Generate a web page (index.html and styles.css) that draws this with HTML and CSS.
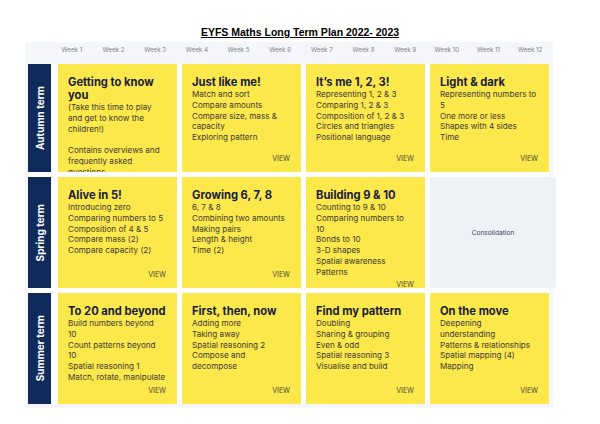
FILE: index.html
```html
<!DOCTYPE html>
<html lang="en">
<head>
<meta charset="utf-8">
<title>EYFS Maths Long Term Plan</title>
<link rel="stylesheet" href="styles.css">
</head>
<body>
<div class="page">
  <h1 class="title">EYFS Maths Long Term Plan 2022- 2023</h1>
  <div class="panel">
    <div class="weeks">
      <span>Week 1</span><span>Week 2</span><span>Week 3</span><span>Week 4</span>
      <span>Week 5</span><span>Week 6</span><span>Week 7</span><span>Week 8</span>
      <span>Week 9</span><span>Week 10</span><span>Week 11</span><span>Week 12</span>
    </div>
    <div class="plan">
      <div class="term"><span>Autumn term</span></div>
      <div class="card">
        <div class="card-title">Getting to know<br>you</div>
        <div class="line">(Take this time to play</div>
        <div class="line">and get to know the</div>
        <div class="line">children!)</div>
        <div class="line">&nbsp;</div>
        <div class="line">Contains overviews and</div>
        <div class="line">frequently asked</div>
        <div class="line">questions</div>
      </div>
      <div class="card">
        <div class="card-title">Just like me!</div>
        <div class="line">Match and sort</div>
        <div class="line">Compare amounts</div>
        <div class="line">Compare size, mass &amp;</div>
        <div class="line">capacity</div>
        <div class="line">Exploring pattern</div>
        <div class="view">VIEW</div>
      </div>
      <div class="card">
        <div class="card-title">It’s me 1, 2, 3!</div>
        <div class="line">Representing 1, 2 &amp; 3</div>
        <div class="line">Comparing 1, 2 &amp; 3</div>
        <div class="line">Composition of 1, 2 &amp; 3</div>
        <div class="line">Circles and triangles</div>
        <div class="line">Positional language</div>
        <div class="view">VIEW</div>
      </div>
      <div class="card">
        <div class="card-title">Light &amp; dark</div>
        <div class="line">Representing numbers to</div>
        <div class="line">5</div>
        <div class="line">One more or less</div>
        <div class="line">Shapes with 4 sides</div>
        <div class="line">Time</div>
        <div class="view">VIEW</div>
      </div>

      <div class="term"><span>Spring term</span></div>
      <div class="card">
        <div class="card-title">Alive in 5!</div>
        <div class="line">Introducing zero</div>
        <div class="line">Comparing numbers to 5</div>
        <div class="line">Composition of 4 &amp; 5</div>
        <div class="line">Compare mass (2)</div>
        <div class="line">Compare capacity (2)</div>
        <div class="view">VIEW</div>
      </div>
      <div class="card">
        <div class="card-title">Growing 6, 7, 8</div>
        <div class="line">6, 7 &amp; 8</div>
        <div class="line">Combining two amounts</div>
        <div class="line">Making pairs</div>
        <div class="line">Length &amp; height</div>
        <div class="line">Time (2)</div>
        <div class="view">VIEW</div>
      </div>
      <div class="card">
        <div class="card-title">Building 9 &amp; 10</div>
        <div class="line">Counting to 9 &amp; 10</div>
        <div class="line">Comparing numbers to</div>
        <div class="line">10</div>
        <div class="line">Bonds to 10</div>
        <div class="line">3-D shapes</div>
        <div class="line">Spatial awareness</div>
        <div class="line">Patterns</div>
        <div class="view">VIEW</div>
      </div>
      <div class="consolidation">Consolidation</div>

      <div class="term"><span>Summer term</span></div>
      <div class="card">
        <div class="card-title">To 20 and beyond</div>
        <div class="line">Build numbers beyond</div>
        <div class="line">10</div>
        <div class="line">Count patterns beyond</div>
        <div class="line">10</div>
        <div class="line">Spatial reasoning 1</div>
        <div class="line">Match, rotate, manipulate</div>
        <div class="view">VIEW</div>
      </div>
      <div class="card">
        <div class="card-title">First, then, now</div>
        <div class="line">Adding more</div>
        <div class="line">Taking away</div>
        <div class="line">Spatial reasoning 2</div>
        <div class="line">Compose and</div>
        <div class="line">decompose</div>
        <div class="view">VIEW</div>
      </div>
      <div class="card">
        <div class="card-title">Find my pattern</div>
        <div class="line">Doubling</div>
        <div class="line">Sharing &amp; grouping</div>
        <div class="line">Even &amp; odd</div>
        <div class="line">Spatial reasoning 3</div>
        <div class="line">Visualise and build</div>
        <div class="view">VIEW</div>
      </div>
      <div class="card">
        <div class="card-title">On the move</div>
        <div class="line">Deepening</div>
        <div class="line">understanding</div>
        <div class="line">Patterns &amp; relationships</div>
        <div class="line">Spatial mapping (4)</div>
        <div class="line">Mapping</div>
        <div class="view">VIEW</div>
      </div>
    </div>
  </div>
</div>
</body>
</html>
```

FILE: styles.css
```css
* { box-sizing: border-box; }

html, body {
  margin: 0;
  padding: 0;
  background: #ffffff;
}

.page {
  width: 600px;
  height: 424px;
  overflow: hidden;
  font-family: Inter, "Liberation Sans", sans-serif;
}

.title {
  margin: 25px 0 3px;
  font-family: "Liberation Sans", sans-serif;
  font-size: 10.5px;
  line-height: 14px;
  font-weight: bold;
  text-align: center;
  text-decoration: underline;
  color: #000;
}

.panel {
  margin-left: 25px;
  width: 528px;
  background: #f4f6f9;
  padding: 0 4px 4px 3px;
}

.weeks {
  display: grid;
  grid-template-columns: repeat(12, 1fr);
  width: 500px;
  margin-left: 23px;
  height: 22px;
  padding-top: 3px;
  font-size: 6.2px;
  line-height: 10px;
  color: #7d828a;
  text-align: center;
}

.plan {
  display: grid;
  grid-template-columns: 25px repeat(4, 119px);
  grid-template-rows: 108px 111px 111px;
  column-gap: 5px;
  row-gap: 5px;
  background: #ffffff;
}

.term {
  width: 23px;
  background: #0e2b5c;
  color: #ffffff;
  display: flex;
  align-items: center;
  justify-content: center;
}

.term span {
  writing-mode: vertical-rl;
  transform: rotate(180deg);
  font-size: 10px;
  font-weight: 700;
  white-space: nowrap;
}

.card {
  background: #fde84b;
  padding: 12px 11px 8px 10px;
  display: flex;
  flex-direction: column;
  overflow: hidden;
}

.card > * { flex-shrink: 0; }

.card-title {
  font-size: 11.2px;
  line-height: 13px;
  font-weight: 700;
  color: #17203a;
  white-space: nowrap;
}

.line {
  font-size: 8.1px;
  line-height: 10.8px;
  color: #3b3b35;
  white-space: nowrap;
}

.view {
  margin-top: auto;
  padding-top: 2px;
  align-self: flex-end;
  font-size: 7px;
  line-height: 10px;
  color: #4a4a40;
}

.consolidation {
  margin-right: -7px;
  background: #eef1f5;
  display: flex;
  align-items: center;
  justify-content: center;
  font-size: 6.6px;
  color: #3a4766;
}
```
